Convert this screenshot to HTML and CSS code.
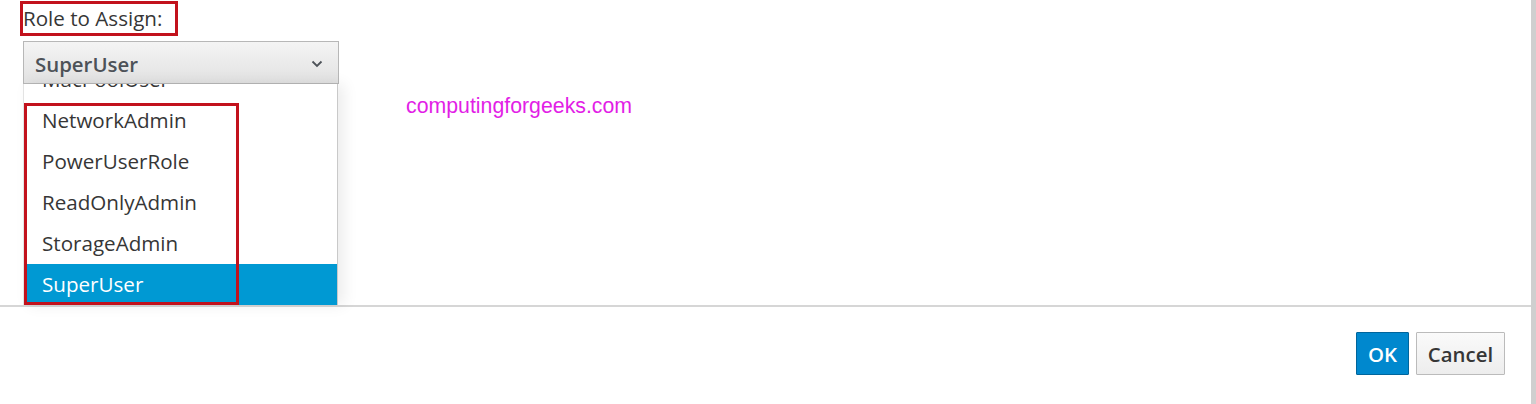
FILE: index.html
```html
<!DOCTYPE html>
<html>
<head>
<meta charset="utf-8">
<link rel="stylesheet" href="styles.css">
</head>
<body>
<div class="page">
  <div class="dialog">
    <div class="content">
      <div class="label-box"><span class="label">Role to Assign:</span></div>
      <div class="select-wrap">
        <div class="select">
          <span class="select-value">SuperUser</span>
          <svg class="chevron" width="12" height="8" viewBox="0 0 12 8"><path d="M1.5 1.5 L6 6 L10.5 1.5" fill="none" stroke="#4d5258" stroke-width="1.8"/></svg>
        </div>
        <div class="menu">
          <ul class="menu-list">
            <li class="item">MacPoolUser</li>
            <li class="item">NetworkAdmin</li>
            <li class="item">PowerUserRole</li>
            <li class="item">ReadOnlyAdmin</li>
            <li class="item">StorageAdmin</li>
            <li class="item selected">SuperUser</li>
          </ul>
          <div class="highlight"></div>
        </div>
      </div>
      <div class="watermark">computingforgeeks.com</div>
    </div>
    <div class="footer">
      <button class="btn btn-primary">OK</button>
      <button class="btn btn-default">Cancel</button>
    </div>
  </div>
  <div class="scrollbar"></div>
</div>
</body>
</html>
```
FILE: styles.css
```css
* { box-sizing: border-box; }
html, body { margin: 0; padding: 0; background: #fff; }
body { font-family: "Open Sans", "Liberation Sans", sans-serif; color: #363636; }
.page { display: flex; width: 1536px; height: 404px; overflow: hidden; }
.dialog { flex: 1; display: flex; flex-direction: column; }
.content { position: relative; height: 305px; padding: 1px 0 0 20px; }
.label-box {
  display: inline-block;
  border: 3px solid #c2121c;
  padding: 0 13px 0 0;
  height: 35px;
}
.label { display: block; font-size: 20.6px; line-height: 29px; color: #363636; }
.select-wrap { position: relative; margin: 5px 0 0 3px; width: 316px; }
.select {
  height: 43px;
  border: 1px solid #b7b7b7;
  background: linear-gradient(#f4f4f4, #e2e2e2);
  display: flex; align-items: center; justify-content: space-between;
  padding: 2px 15px 0 11px;
}
.select-value { font-size: 20.4px; font-weight: 600; color: #4d5258; }
.chevron { margin-top: 1px; }
.menu {
  position: absolute; left: 0; top: 43px;
  width: 315px; height: 221px;
  background: #fff;
  border-left: 1px solid #e3e3e3;
  border-right: 1px solid #c9c9c9;
  box-shadow: 6px 0 14px rgba(0,0,0,0.08);
  overflow: hidden;
  z-index: 2;
}
.menu-list { list-style: none; margin: -25px 0 0 0; padding: 0; }
.item { height: 41px; line-height: 41px; padding-left: 18px; font-size: 20.6px; color: #363636; }
.item.selected { background: #0099d3; color: #fff; }
.highlight {
  position: absolute; left: 0; top: 19px;
  width: 215px; height: 202px;
  border: 3px solid #c2121c;
}
.watermark {
  position: absolute; left: 406px; top: 94px;
  font-family: "Liberation Sans", Arial, sans-serif;
  font-size: 21.3px; color: #e21ee6;
}
.footer {
  border-top: 2px solid #d6d6d6;
  display: flex; justify-content: flex-end; gap: 7px;
  padding: 25px 26px 0 0;
  flex: 1;
}
.btn {
  height: 43px; font-family: "Open Sans", "Liberation Sans", sans-serif;
  font-size: 20.4px; font-weight: 600; border-radius: 1px; padding: 0;
}
.btn-primary { width: 53px; background: #0088ce; border: 1px solid #00659c; color: #fff; }
.btn-default { width: 89px; background: linear-gradient(#fafafa, #ededed); border: 1px solid #bbb; color: #363636; }
.scrollbar { width: 5px; height: 404px; background: #cfcfcf; }
```
